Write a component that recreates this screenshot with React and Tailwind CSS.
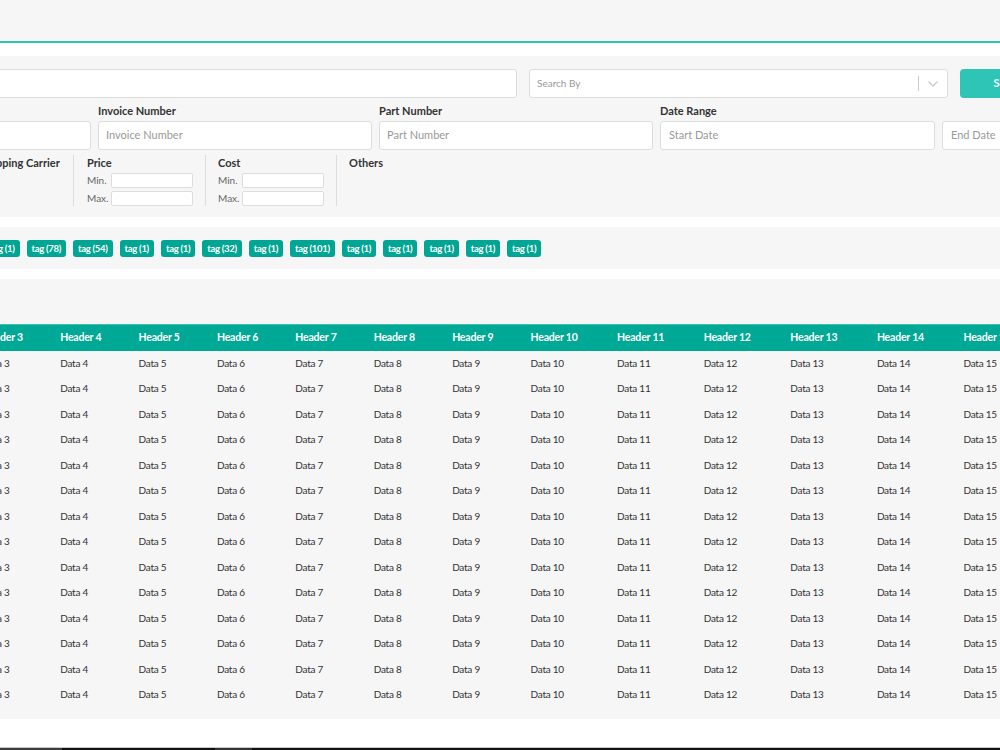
import React from "react";

const tags = ["tag (1)", "tag (1)", "tag (1)", "tag (1)", "tag (1)", "tag (78)", "tag (54)", "tag (1)", "tag (1)", "tag (32)", "tag (1)", "tag (101)", "tag (1)", "tag (1)", "tag (1)", "tag (1)", "tag (1)"];
const cols = Array.from({ length: 20 }, (_, i) => i + 1);
const rows = Array.from({ length: 14 }, (_, i) => i);

function Chevron() {
  return (
    <svg width="12" height="8" viewBox="0 0 12 8" fill="none">
      <path d="M1.5 1.5 L6 6 L10.5 1.5" stroke="#cccccc" strokeWidth="1.4" />
    </svg>
  );
}

function MinMax({ label }) {
  return (
    <div className="flex items-center">
      <span className="w-[24px] text-[10px] text-[#666]">{label}</span>
      <div className="w-[82px] h-[15px] bg-white border border-[#dddddd] rounded-[2px]" />
    </div>
  );
}

export default function App() {
  return (
    <div className="w-[1000px] h-[750px] overflow-hidden flex flex-col bg-white" style={{ fontFamily: "Lato, 'Noto Sans', sans-serif" }}>
      <div className="h-[41px] shrink-0 bg-[#f6f6f6]" />
      <div className="h-[2px] shrink-0 bg-[#2ec4b6]" />
      <div className="h-[13px] shrink-0" />
      <div className="shrink-0 overflow-hidden">
        <div className="-ml-[203px] w-[1800px]">
          {/* Search section */}
          <div className="bg-[#f6f6f6] pt-[13px] pb-[11px] pl-[20px]">
            <div className="flex gap-[12px]">
              <div className="w-[700px] h-[29px] bg-white border border-[#dddddd] rounded-[3px]" />
              <div className="w-[419px] h-[29px] bg-white border border-[#dddddd] rounded-[3px] flex items-center">
                <span className="flex-1 pl-[7px] text-[10px] text-[#999]">Search By</span>
                <div className="w-[1px] h-[15px] bg-[#cccccc]" />
                <div className="w-[28px] flex justify-center"><Chevron /></div>
              </div>
              <div className="w-[100px] h-[29px] bg-[#2ec4b6] rounded-[4px] flex items-center justify-center text-white text-[11px] font-bold">Search</div>
            </div>
            <div className="flex gap-[7px] mt-[5px]">
              {[
                ["Order Number", "Order Number"],
                ["Invoice Number", "Invoice Number"],
                ["Part Number", "Part Number"],
              ].map(([l, p]) => (
                <div key={l} className="w-[274px]">
                  <div className="text-[11px] leading-[16px] font-bold text-[#333]">{l}</div>
                  <div className="mt-[2px] h-[29px] bg-white border border-[#dddddd] rounded-[3px] flex items-center pl-[7px] text-[11px] text-[#999]">{p}</div>
                </div>
              ))}
              <div>
                <div className="text-[11px] leading-[16px] font-bold text-[#333]">Date Range</div>
                <div className="mt-[2px] flex gap-[7px]">
                  <div className="w-[275px] h-[29px] bg-white border border-[#dddddd] rounded-[3px] flex items-center pl-[8px] text-[11px] text-[#999]">Start Date</div>
                  <div className="w-[275px] h-[29px] bg-white border border-[#dddddd] rounded-[3px] flex items-center pl-[8px] text-[11px] text-[#999]">End Date</div>
                </div>
              </div>
            </div>
            <div className="flex mt-[5px]">
              <div className="w-[150px] pr-[13px]">
                <div className="text-[11px] leading-[16px] font-bold text-[#333]">Status</div>
              </div>
              <div className="w-[106px] pl-[13px] border-l border-[#dddddd] whitespace-nowrap">
                <div className="text-[11px] leading-[16px] font-bold text-[#333]">Shipping Carrier</div>
              </div>
              <div className="pl-[13px] pr-[12px] border-l border-[#dddddd]">
                <div className="text-[11px] leading-[16px] font-bold text-[#333]">Price</div>
                <div className="mt-[2px]"><MinMax label="Min." /></div>
                <div className="mt-[3px]"><MinMax label="Max." /></div>
              </div>
              <div className="pl-[12px] pr-[12px] border-l border-[#dddddd]">
                <div className="text-[11px] leading-[16px] font-bold text-[#333]">Cost</div>
                <div className="mt-[2px]"><MinMax label="Min." /></div>
                <div className="mt-[3px]"><MinMax label="Max." /></div>
              </div>
              <div className="pl-[12px] border-l border-[#dddddd]">
                <div className="text-[11px] leading-[16px] font-bold text-[#333]">Others</div>
              </div>
            </div>
          </div>

          {/* Tags */}
          <div className="mt-[10px] bg-[#f6f6f6] pt-[13px] pb-[12px] pl-[23px] flex gap-[7px]">
            {tags.map((t, i) => (
              <span key={i} className="h-[17px] px-[5px] rounded-[3px] bg-[#00a693] text-white text-[9.5px] tracking-[-0.3px] font-bold leading-[17px] whitespace-nowrap">{t}</span>
            ))}
          </div>

          {/* Table */}
          <div className="mt-[10px] bg-[#f6f6f6] pt-[45px] pb-[11px] pl-[20px]">
            <table className="table-fixed border-collapse">
              <thead>
                <tr className="h-[26px] bg-[#00a896] border-t border-[#3fc0b0]">
                  {cols.map((c) => (
                    <th key={c} className={(c < 10 ? "w-[78.4px]" : "w-[86.6px]") + " pl-[8px] text-left text-[10.5px] tracking-[-0.2px] font-bold text-white whitespace-nowrap"}>Header {c}</th>
                  ))}
                </tr>
              </thead>
              <tbody>
                {rows.map((r) => (
                  <tr key={r} className="h-[25.5px]">
                    {cols.map((c) => (
                      <td key={c} className="pl-[8px] text-[10px] tracking-[-0.25px] text-[#333] whitespace-nowrap">Data {c}</td>
                    ))}
                  </tr>
                ))}
              </tbody>
            </table>
          </div>
        </div>
      </div>
      <div className="flex-1" />
      <div className="h-[1px] shrink-0 bg-[#c8c8c8]" />
      <div className="h-[2px] shrink-0 flex">
        <div className="w-[62px] bg-[#3c3c3c]" />
        <div className="w-[153px] bg-[#111111]" />
        <div className="w-[37px] bg-[#333333]" />
        <div className="flex-1 bg-[#111111]" />
      </div>
    </div>
  );
}
